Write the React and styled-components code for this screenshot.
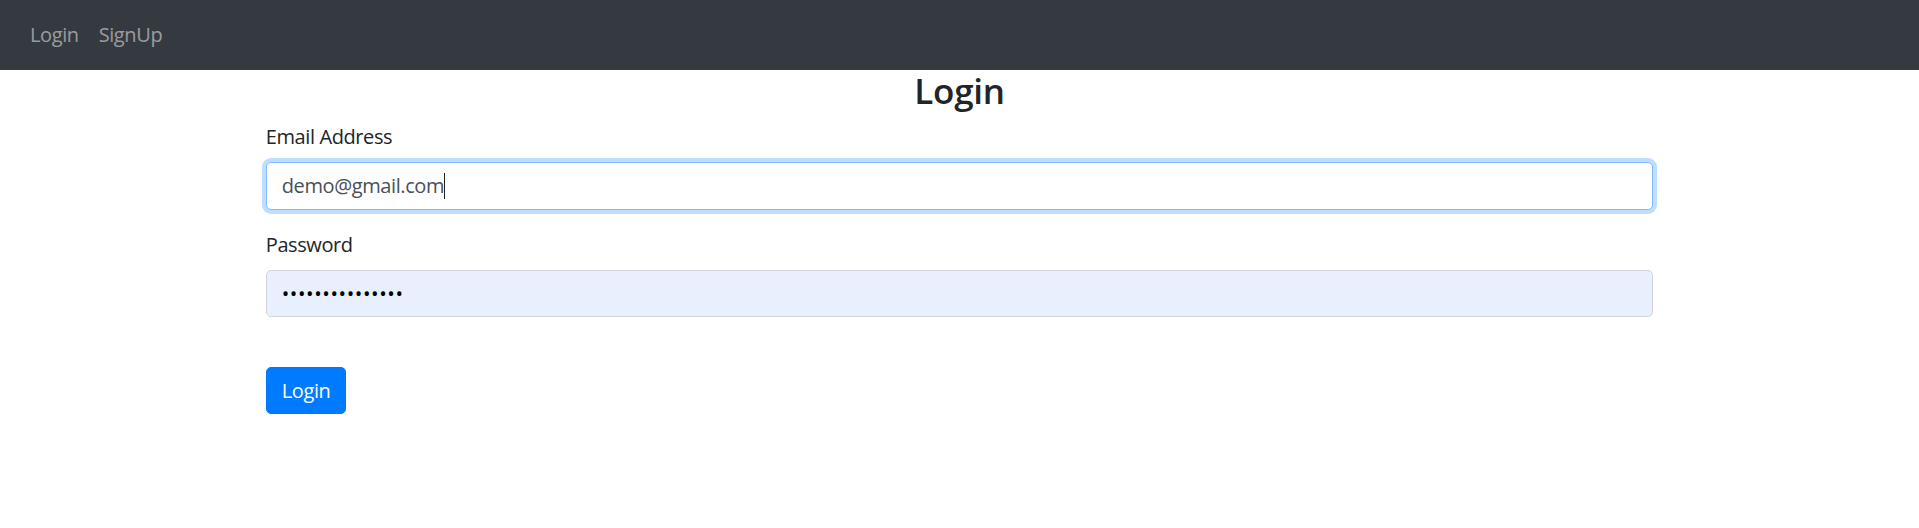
import React from "react";
import styled, { createGlobalStyle } from "styled-components";

const Global = createGlobalStyle`
  html, body { margin: 0; padding: 0; background: #fff; }
  body {
    font-family: "Open Sans", "Noto Sans", sans-serif;
    font-size: 20px;
    line-height: 1.5;
    color: #212529;
    letter-spacing: -0.4px;
  }
  * { box-sizing: border-box; }
`;

const NavBar = styled.nav`
  display: flex;
  align-items: center;
  height: 70px;
  padding: 10px 20px;
  background: #343a40;
`;

const NavLink = styled.a`
  display: block;
  padding: 10px;
  line-height: 30px;
  font-size: 20px;
  color: rgba(255, 255, 255, 0.5);
  text-decoration: none;
  cursor: pointer;
`;

const Container = styled.main`
  width: 1425px;
  margin: 0 auto;
  padding: 0 18.75px;
`;

const Title = styled.h3`
  margin: 0 0 10px;
  font-size: 35px;
  font-weight: 600;
  line-height: 42px;
  text-align: center;
  letter-spacing: -0.3px;
  color: #212529;
`;

const Group = styled.div`
  margin-bottom: 20px;
`;

const Label = styled.label`
  display: block;
  margin-bottom: 10px;
  line-height: 30px;
  color: #212529;
`;

const FieldWrap = styled.div`
  position: relative;
`;

const Input = styled.input`
  display: block;
  width: 100%;
  height: 47.5px;
  padding: 7.5px 15px;
  font-family: inherit;
  font-size: 20px;
  line-height: 30px;
  border-radius: 5px;
  outline: none;
  color: ${(p) => (p.$autofill ? "#000" : "#495057")};
  background: ${(p) => (p.$autofill ? "#e8f0fe" : "#fff")};
  border: 1.25px solid ${(p) => (p.$focused ? "#80bdff" : "#ced4da")};
  box-shadow: ${(p) => (p.$focused ? "0 0 0 4px rgba(0,123,255,.25)" : "none")};
  letter-spacing: ${(p) => (p.$autofill ? "0.6px" : "-0.4px")};
`;

const Caret = styled.span`
  position: absolute;
  left: 178px;
  top: 11px;
  width: 1.5px;
  height: 26px;
  background: #212529;
`;

const Spacer = styled.div`
  height: 30px;
`;

const Button = styled.button`
  display: inline-block;
  padding: 7.5px 15px;
  font-family: inherit;
  font-size: 20px;
  line-height: 30px;
  letter-spacing: -0.4px;
  color: #fff;
  background: #007bff;
  border: 1.25px solid #007bff;
  border-radius: 5px;
  cursor: pointer;
`;

export default function App() {
  return (
    <>
      <Global />
      <NavBar>
        <NavLink>Login</NavLink>
        <NavLink>SignUp</NavLink>
      </NavBar>
      <Container>
        <Title>Login</Title>
        <form onSubmit={(e) => e.preventDefault()}>
          <Group>
            <Label htmlFor="email">Email Address</Label>
            <FieldWrap>
              <Input id="email" type="email" defaultValue="demo@gmail.com" $focused />
              <Caret />
            </FieldWrap>
          </Group>
          <Group>
            <Label htmlFor="password">Password</Label>
            <Input id="password" type="password" defaultValue="demopassword123" $autofill />
          </Group>
          <Spacer />
          <Button type="submit">Login</Button>
        </form>
      </Container>
    </>
  );
}
